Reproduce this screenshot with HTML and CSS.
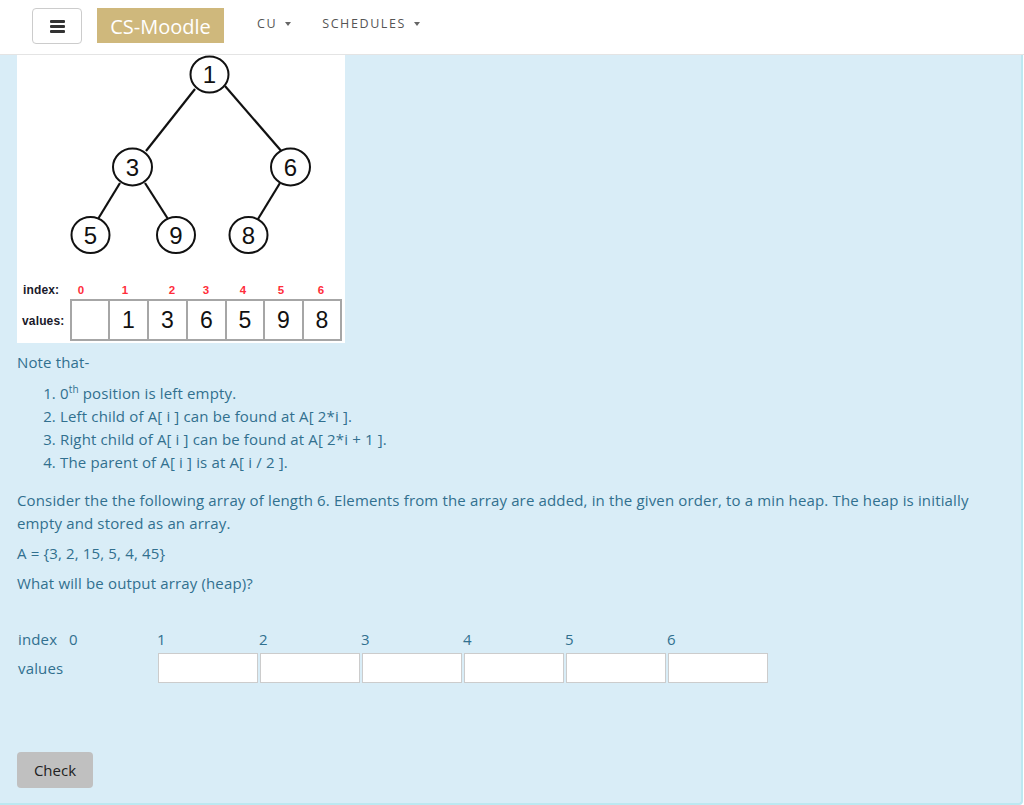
FILE: index.html
```html
<!DOCTYPE html>
<html lang="en">
<head>
<meta charset="utf-8">
<title>CS-Moodle</title>
<link rel="stylesheet" href="styles.css">
</head>
<body>
<header class="navbar">
  <button class="nav-toggle" type="button" aria-label="Menu">
    <span class="bar"></span><span class="bar"></span><span class="bar"></span>
  </button>
  <a class="brand" href="#">CS-Moodle</a>
  <ul class="nav-menu">
    <li class="nav-item">CU <span class="caret"></span></li>
    <li class="nav-item">SCHEDULES <span class="caret"></span></li>
  </ul>
</header>
<main class="question">
  <div class="figure">
    <svg class="heap" width="328" height="288" viewBox="0 0 328 288">
      <g class="edges">
        <line x1="178" y1="34" x2="129" y2="96"/>
        <line x1="208" y1="31" x2="266" y2="98"/>
        <line x1="103" y1="128" x2="81" y2="164"/>
        <line x1="128" y1="128" x2="151" y2="164"/>
        <line x1="263" y1="128" x2="241" y2="164"/>
      </g>
      <g class="nodes">
        <ellipse cx="192.5" cy="19.5" rx="19" ry="18"/>
        <ellipse cx="115.5" cy="112" rx="19.5" ry="18.5"/>
        <ellipse cx="273.5" cy="112" rx="19.5" ry="18.5"/>
        <ellipse cx="73.5" cy="180" rx="19" ry="18"/>
        <ellipse cx="159" cy="180" rx="19" ry="18"/>
        <ellipse cx="231.5" cy="180" rx="19" ry="18"/>
      </g>
      <g class="node-labels">
        <text x="192.5" y="28">1</text>
        <text x="115.5" y="120.5">3</text>
        <text x="273.5" y="120.5">6</text>
        <text x="73.5" y="188.5">5</text>
        <text x="159" y="188.5">9</text>
        <text x="231.5" y="188.5">8</text>
      </g>
      <text class="row-label" x="6" y="239">index:</text>
      <text class="row-label" x="5" y="270">values:</text>
      <g class="idx">
        <text x="64" y="239">0</text>
        <text x="108" y="239">1</text>
        <text x="155" y="239">2</text>
        <text x="189" y="239">3</text>
        <text x="226" y="239">4</text>
        <text x="264" y="239">5</text>
        <text x="304" y="239">6</text>
      </g>
      <rect class="cells" x="54" y="245" width="270" height="40"/>
      <g class="dividers">
        <line x1="92" y1="245" x2="92" y2="285"/>
        <line x1="131" y1="245" x2="131" y2="285"/>
        <line x1="170" y1="245" x2="170" y2="285"/>
        <line x1="209" y1="245" x2="209" y2="285"/>
        <line x1="247" y1="245" x2="247" y2="285"/>
        <line x1="286" y1="245" x2="286" y2="285"/>
      </g>
      <g class="vals">
        <text x="111.5" y="273">1</text>
        <text x="150.5" y="273">3</text>
        <text x="189.5" y="273">6</text>
        <text x="228" y="273">5</text>
        <text x="266.5" y="273">9</text>
        <text x="305" y="273">8</text>
      </g>
    </svg>
  </div>

  <p class="note">Note that-</p>
  <ol class="rules">
    <li>0<sup>th</sup> position is left empty.</li>
    <li>Left child of A[ i ] can be found at A[ 2*i ].</li>
    <li>Right child of A[ i ] can be found at A[ 2*i + 1 ].</li>
    <li>The parent of A[ i ] is at A[ i / 2 ].</li>
  </ol>

  <p>Consider the the following array of length 6. Elements from the array are added, in the given order, to a min heap. The heap is initially empty and stored as an array.</p>
  <p>A = {3, 2, 15, 5, 4, 45}</p>
  <p>What will be output array (heap)?</p>

  <div class="answer">
    <span class="lbl">index</span>
    <span class="num">0</span>
    <span class="num">1</span>
    <span class="num">2</span>
    <span class="num">3</span>
    <span class="num">4</span>
    <span class="num">5</span>
    <span class="num">6</span>
    <span class="lbl values">values</span>
    <span></span>
    <input class="cell" type="text" aria-label="value 1">
    <input class="cell" type="text" aria-label="value 2">
    <input class="cell" type="text" aria-label="value 3">
    <input class="cell" type="text" aria-label="value 4">
    <input class="cell" type="text" aria-label="value 5">
    <input class="cell" type="text" aria-label="value 6">
  </div>

  <button class="check" type="button">Check</button>
</main>
</body>
</html>
```

FILE: styles.css
```css
* { box-sizing: border-box; }

html, body {
  margin: 0;
  padding: 0;
  background: #ffffff;
}

body {
  font-family: "Open Sans", "Liberation Sans", sans-serif;
  font-size: 15px;
  line-height: 23px;
  letter-spacing: 0.15px;
  color: #31708f;
}

/* ---------- navbar ---------- */
.navbar {
  display: flex;
  align-items: flex-start;
  height: 55px;
  padding: 8px 0 0 32px;
  background: #ffffff;
  border-bottom: 1px solid #e4e4e4;
  letter-spacing: 0;
}

.nav-toggle {
  width: 50px;
  height: 36px;
  padding: 0;
  display: flex;
  flex-direction: column;
  align-items: center;
  justify-content: center;
  gap: 2px;
  background: #ffffff;
  border: 1px solid #cccccc;
  border-radius: 4px;
}

.nav-toggle .bar {
  display: block;
  width: 15px;
  height: 3px;
  background: #333333;
  border-radius: 1px;
}

.brand {
  margin-left: 15px;
  width: 127px;
  height: 35px;
  padding-top: 2px;
  display: flex;
  align-items: center;
  justify-content: center;
  background: #cfb87c;
  color: #ffffff;
  font-size: 20px;
  text-decoration: none;
}

.nav-menu {
  display: flex;
  list-style: none;
  margin: 0 0 0 18px;
  padding: 0;
}

.nav-item {
  display: flex;
  align-items: center;
  padding: 5px 16px 5px 15px;
  font-size: 12.5px;
  line-height: 21px;
  letter-spacing: 1.6px;
  color: #555555;
}

.caret {
  display: inline-block;
  margin-left: 8px;
  width: 0;
  height: 0;
  border-left: 3.5px solid transparent;
  border-right: 3.5px solid transparent;
  border-top: 4px solid #666666;
}

/* ---------- question panel ---------- */
.question {
  width: 1023px;
  min-height: 750px;
  padding: 0 17px 15px 17px;
  background: #d9edf7;
  border-right: 2px solid #bce8f1;
  border-bottom: 2px solid #bce8f1;
  border-bottom-right-radius: 4px;
  display: flex;
  flex-direction: column;
  align-items: flex-start;
}

.figure {
  width: 328px;
  height: 288px;
  background: #ffffff;
}

.heap { display: block; }

.heap .edges line {
  stroke: #111111;
  stroke-width: 2.2;
}

.heap .nodes ellipse {
  fill: #ffffff;
  stroke: #111111;
  stroke-width: 2;
}

.heap .node-labels text {
  font-family: "Liberation Sans", Arial, sans-serif;
  font-size: 24px;
  text-anchor: middle;
  fill: #111111;
}

.heap .row-label {
  font-family: "Liberation Sans", Arial, sans-serif;
  font-size: 12px;
  font-weight: bold;
  fill: #1a1a2a;
}

.heap .idx text {
  font-family: "Liberation Sans", Arial, sans-serif;
  font-size: 11.5px;
  font-weight: bold;
  text-anchor: middle;
  fill: #ff2d3a;
}

.heap .cells {
  fill: #ffffff;
  stroke: #a6a6a6;
  stroke-width: 2;
}

.heap .dividers line {
  stroke: #a6a6a6;
  stroke-width: 2;
}

.heap .vals text {
  font-family: "Liberation Sans", Arial, sans-serif;
  font-size: 23px;
  text-anchor: middle;
  fill: #111111;
}

p {
  margin: 0 0 7px 0;
}

.note {
  margin-top: 8px;
  margin-bottom: 8px;
}

.rules {
  margin: 0 0 15px 0;
  padding-left: 43px;
}

.rules sup {
  font-size: 10px;
  line-height: 0;
  vertical-align: 6px;
}

/* ---------- answer grid ---------- */
.answer {
  margin-top: 26px;
  display: grid;
  grid-template-columns: 53px 88px repeat(6, 102px);
  grid-auto-rows: auto;
  row-gap: 2px;
  align-items: center;
}

.answer .lbl { padding-left: 1px; }

.answer .num { padding-left: 0; margin-left: -1px; }

.cell {
  width: 100px;
  height: 30px;
  margin: 0;
  padding: 0 6px;
  background: #ffffff;
  border: 1px solid #cccccc;
  font: inherit;
}

.check {
  margin-top: 69px;
  width: 76px;
  height: 36px;
  padding: 0;
  background: #c0c0c0;
  border: none;
  border-radius: 4px;
  font-family: "Open Sans", "Liberation Sans", sans-serif;
  font-size: 15px;
  color: #222222;
}
```
